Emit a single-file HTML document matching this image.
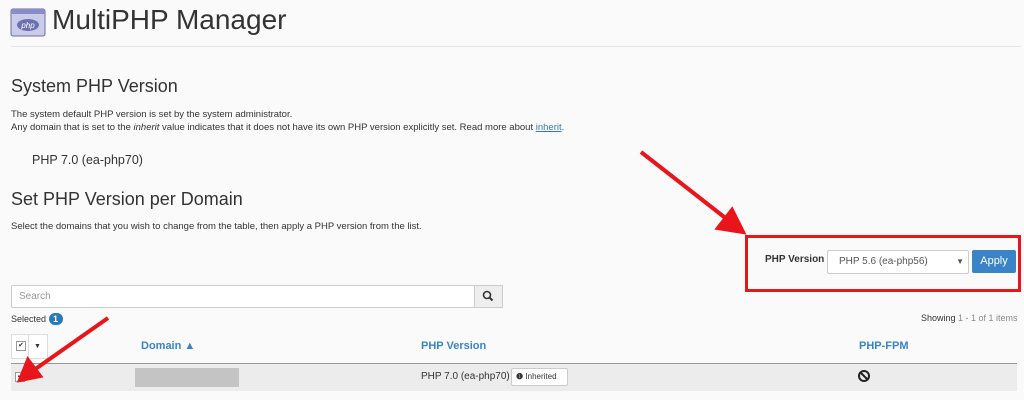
<!DOCTYPE html><html><head><style>
body{margin:0;width:1024px;height:400px;background:#fafafa;font-family:"Liberation Sans",sans-serif;color:#333;position:relative;overflow:hidden}
.a{position:absolute;white-space:nowrap}
</style></head><body>
<svg class="a" style="left:10px;top:8px" width="36" height="30"><rect x="1" y="1" width="34" height="27" rx="2" fill="#c9cbe8" stroke="#6b6ea8"/><rect x="1" y="1" width="34" height="5" fill="#8a8dc4"/><ellipse cx="18" cy="17" rx="11" ry="6" fill="#6d70b0"/><text x="18" y="20" font-size="8" fill="#fff" text-anchor="middle" font-style="italic">php</text></svg>
<div class="a" style="left:52px;top:4px;font-size:28px;color:#333">MultiPHP Manager</div>
<div class="a" style="left:11px;top:46px;width:1010px;border-top:1px solid #e5e5e5"></div>
<div class="a" style="left:11px;top:76px;font-size:18px">System PHP Version</div>
<div class="a" style="left:11px;top:108px;font-size:9.5px;line-height:13px">The system default PHP version is set by the system administrator.<br>Any domain that is set to the <i>inherit</i> value indicates that it does not have its own PHP version explicitly set. Read more about <u style="color:#337ab7">inherit</u>.</div>
<div class="a" style="left:32px;top:153px;font-size:12.5px">PHP 7.0 (ea-php70)</div>
<div class="a" style="left:11px;top:189px;font-size:18px">Set PHP Version per Domain</div>
<div class="a" style="left:11px;top:221px;font-size:9.5px">Select the domains that you wish to change from the table, then apply a PHP version from the list.</div>
<div class="a" style="left:745px;top:235px;width:270px;height:51px;border:3px solid #e8151b"></div>
<div class="a" style="left:765px;top:254px;font-size:10px;font-weight:bold">PHP Version</div>
<div class="a" style="left:827px;top:250px;width:140px;height:22px;border:1px solid #ccc;background:#fff;border-radius:2px;font-size:10px;color:#555;line-height:22px;text-indent:11px">PHP 5.6 (ea-php56)<span style="position:absolute;right:4px;font-size:8px">▼</span></div>
<div class="a" style="left:972px;top:250px;width:44px;height:23px;background:#3b83c7;color:#fff;font-size:11px;line-height:23px;text-align:center;border-radius:2px">Apply</div>
<div class="a" style="left:11px;top:285px;width:462px;height:21px;border:1px solid #ccc;background:#fff;border-radius:2px;font-size:10px;color:#999;line-height:21px;text-indent:7px">Search</div>
<div class="a" style="left:474px;top:285px;width:27px;height:21px;border:1px solid #ccc;background:#eee"></div>
<svg class="a" style="left:482px;top:290px" width="12" height="12"><circle cx="5" cy="5" r="3.5" fill="none" stroke="#333" stroke-width="1.6"/><line x1="7.5" y1="7.5" x2="10.5" y2="10.5" stroke="#333" stroke-width="2"/></svg>
<div class="a" style="left:11px;top:313px;font-size:9px">Selected <span style="display:inline-block;background:#2a7ab8;color:#fff;border-radius:7px;width:14px;height:12px;text-align:center;font-weight:bold;line-height:12px">1</span></div>
<div class="a" style="left:921px;top:313px;font-size:9px">Showing <span style="color:#888">1 - 1 of 1 items</span></div>
<div class="a" style="left:11px;top:334px;width:35px;height:23px;border:1px solid #ddd;background:#fff"></div>
<div class="a" style="left:28px;top:334px;height:25px;border-left:1px solid #ddd"></div>
<div class="a" style="left:16px;top:341px;width:8px;height:8px;border:1px solid #999;font-size:7px;line-height:8px;text-align:center">✔</div>
<div class="a" style="left:34px;top:343px;font-size:7px">▼</div>
<div class="a" style="left:141px;top:340px;font-size:11px;font-weight:bold;color:#3b83c7">Domain ▲</div>
<div class="a" style="left:421px;top:340px;font-size:11px;font-weight:bold;color:#3b83c7">PHP Version</div>
<div class="a" style="left:859px;top:340px;font-size:11px;font-weight:bold;color:#3b83c7">PHP-FPM</div>
<div class="a" style="left:11px;top:363px;width:1006px;height:27px;border-top:1px solid #999;background:#ececec"></div>
<div class="a" style="left:15px;top:372px;width:8px;height:8px;border:1px solid #999;background:#fff;font-size:7px;line-height:8px;text-align:center">✔</div>
<div class="a" style="left:135px;top:368px;width:104px;height:19px;background:#c4c4c4"></div>
<div class="a" style="left:421px;top:371px;font-size:10px">PHP 7.0 (ea-php70)</div>
<div class="a" style="left:511px;top:368px;width:55px;height:16px;border:1px solid #ccc;background:#fff;border-radius:2px;font-size:8px;line-height:16px;text-indent:4px"><b>❶</b> Inherited</div>
<svg class="a" style="left:857px;top:369px" width="14" height="14"><circle cx="7" cy="7" r="5" fill="none" stroke="#222" stroke-width="2"/><line x1="3.5" y1="3.5" x2="10.5" y2="10.5" stroke="#222" stroke-width="2"/></svg>
<svg class="a" style="left:0;top:0" width="1024" height="400"><g stroke="#e8151b" stroke-width="4" fill="#e8151b"><line x1="641" y1="152" x2="728" y2="220"/><polygon points="743,232 718,228 732,210"/><line x1="108" y1="318" x2="34" y2="370"/><polygon points="20,380 28,360 40,376"/></g></svg>
</body></html>
